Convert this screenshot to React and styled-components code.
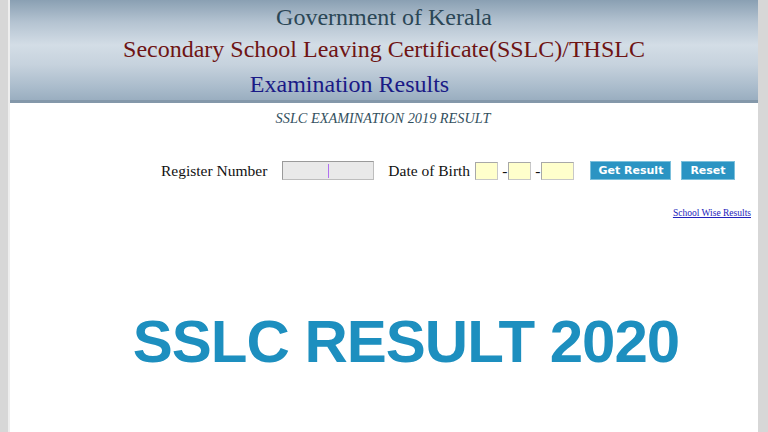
import React from "react";
import styled, { createGlobalStyle } from "styled-components";

const GlobalStyle = createGlobalStyle`
  html, body {
    margin: 0;
    padding: 0;
    background: #d7d7d7;
  }
  body {
    font-family: "Liberation Serif", "Times New Roman", serif;
  }
`;

const Page = styled.div`
  width: 768px;
  height: 432px;
  display: flex;
  justify-content: flex-start;
  background: #d7d7d7;
  overflow: hidden;
`;

const Sheet = styled.div`
  margin-left: 8px;
  width: 750px;
  height: 432px;
  background: #fff;
  border-left: 2px solid #eeeeee;
  box-sizing: border-box;
`;

const Header = styled.header`
  height: 103px;
  box-sizing: border-box;
  border-bottom: 3px solid #8498aa;
  background: linear-gradient(
    180deg,
    #8aa0b3 0%,
    #b4c3d1 22%,
    #d3dde6 45%,
    #c6d2dd 65%,
    #a9bbcb 88%,
    #9aaec0 100%
  );
  display: flex;
  flex-direction: column;
  align-items: center;
  padding-top: 2px;
`;

const HeadLine = styled.div`
  font-size: 24px;
  line-height: ${(p) => p.lh}px;
  color: ${(p) => p.color};
  margin-right: ${(p) => p.shift || 0}px;
  white-space: nowrap;
`;

const Subtitle = styled.div`
  text-align: center;
  font-style: italic;
  font-size: 14.3px;
  color: #33505e;
  margin-top: 7px;
  margin-right: 2px;
`;

const FormRow = styled.div`
  display: flex;
  align-items: center;
  margin-top: 34px;
  padding-left: 151px;
  font-size: 15.5px;
  color: #111;
`;

const Label = styled.span`
  margin-right: ${(p) => p.gap}px;
`;

const RegInput = styled.div`
  width: 92px;
  height: 19px;
  box-sizing: border-box;
  background: #e9e9e9;
  border: 1px solid #bdbdbd;
  border-top-color: #9a9a9a;
  border-left-color: #9a9a9a;
  margin-right: 14px;
  position: relative;
`;

const Caret = styled.span`
  position: absolute;
  left: 45px;
  top: 2px;
  width: 1px;
  height: 14px;
  background: #b070f0;
`;

const DateBox = styled.div`
  width: ${(p) => p.w}px;
  height: 18px;
  box-sizing: border-box;
  background: #ffffcc;
  border: 1px solid #c8c8c8;
  border-top-color: #a8a8a8;
  border-left-color: #a8a8a8;
`;

const Dash = styled.span`
  padding: 0 1px 0 4px;
`;

const Button = styled.button`
  height: 19px;
  padding: 0 ${(p) => p.pad}px;
  margin-left: ${(p) => p.ml}px;
  border: 1px solid #7cc0dc;
  background: #2b94c3;
  color: #fff;
  font-family: Tahoma, "DejaVu Sans", sans-serif;
  font-weight: bold;
  font-size: 11px;
  line-height: 17px;
  cursor: pointer;
`;

const LinkRow = styled.div`
  display: flex;
  justify-content: flex-end;
  margin-top: 28px;
  padding-right: 7px;
`;

const SchoolLink = styled.a`
  font-size: 9.5px;
  color: #2222bb;
  text-decoration: underline;
`;

const BigTitle = styled.h1`
  margin: 92px 0 0;
  padding-left: 44px;
  text-align: center;
  font-family: "Liberation Sans", Arial, sans-serif;
  font-weight: bold;
  font-size: 60px;
  line-height: 64px;
  letter-spacing: -1px;
  color: #1d8fbf;
`;

export default function App() {
  return (
    <>
      <GlobalStyle />
      <Page>
        <Sheet>
          <Header>
            <HeadLine lh={30} color="#2b4756">
              Government of Kerala
            </HeadLine>
            <HeadLine lh={34} color="#6e1414">
              Secondary School Leaving Certificate(SSLC)/THSLC
            </HeadLine>
            <HeadLine lh={36} color="#1a1a86" shift={69}>
              Examination Results
            </HeadLine>
          </Header>
          <Subtitle>SSLC EXAMINATION 2019 RESULT</Subtitle>
          <FormRow>
            <Label gap={15}>Register Number</Label>
            <RegInput>
              <Caret />
            </RegInput>
            <Label gap={5}>Date of Birth</Label>
            <DateBox w={23} />
            <Dash>-</Dash>
            <DateBox w={23} />
            <Dash>-</Dash>
            <DateBox w={33} />
            <Button pad={7} ml={16}>Get Result</Button>
            <Button pad={8} ml={10}>Reset</Button>
          </FormRow>
          <LinkRow>
            <SchoolLink href="#">School Wise Results</SchoolLink>
          </LinkRow>
          <BigTitle>SSLC RESULT 2020</BigTitle>
        </Sheet>
      </Page>
    </>
  );
}
